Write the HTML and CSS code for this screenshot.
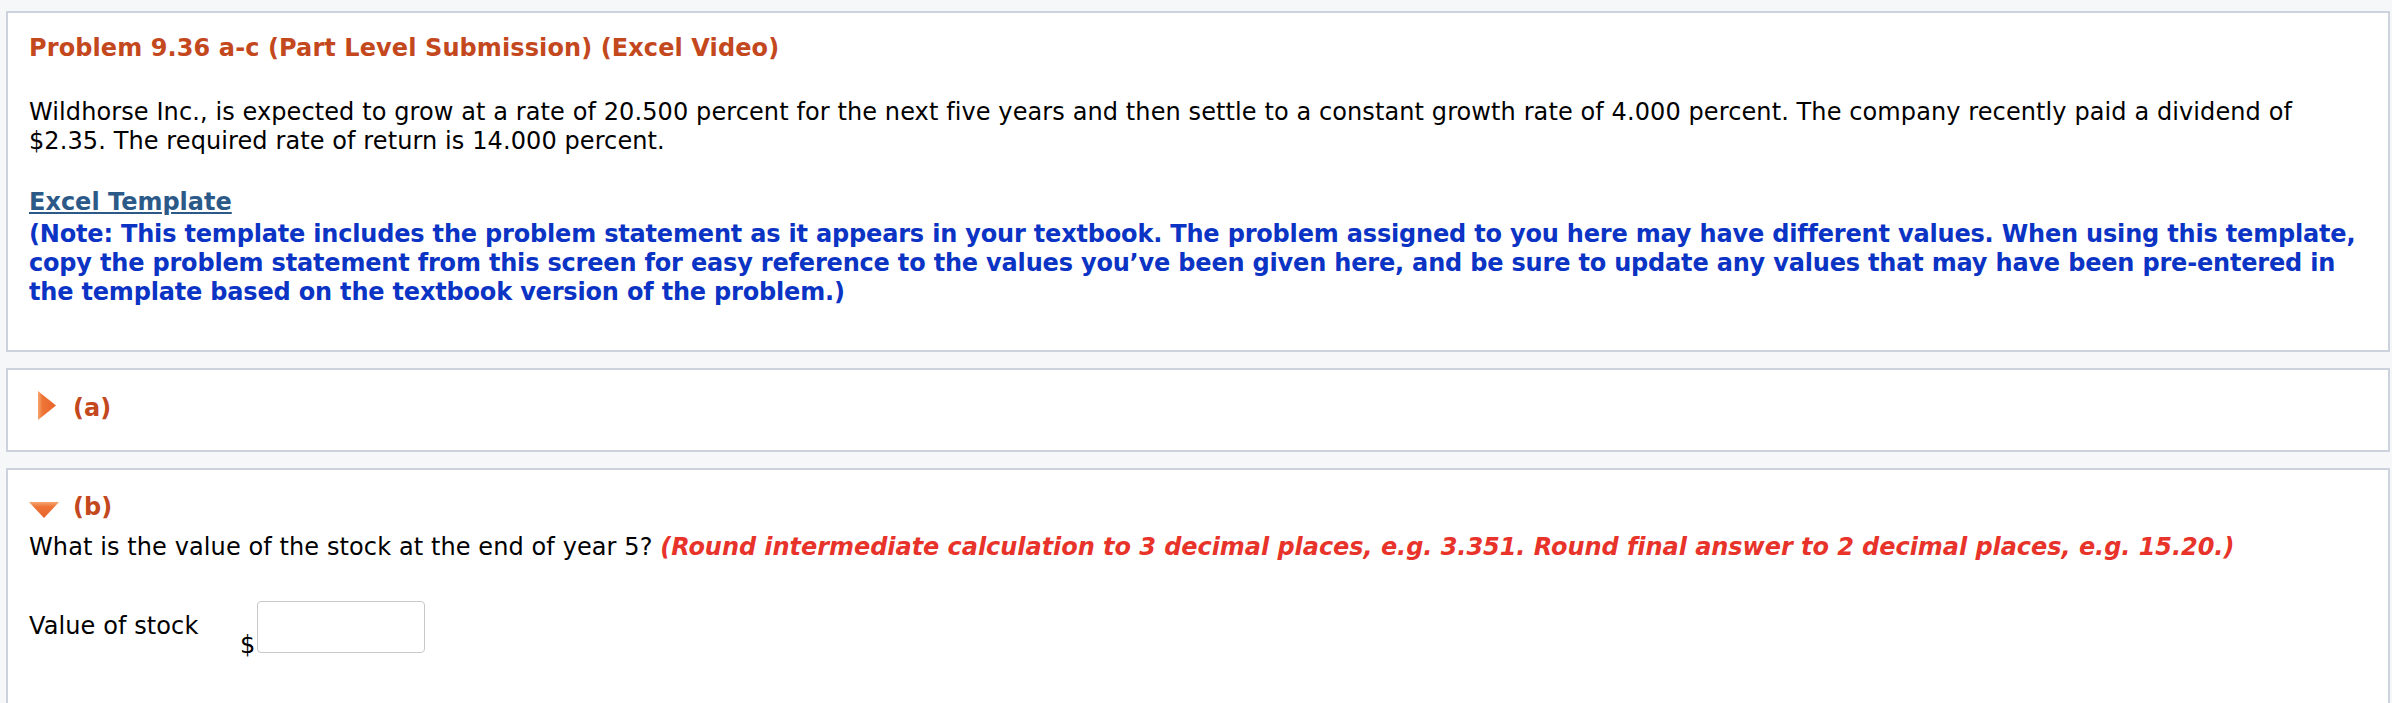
FILE: index.html
```html
<!DOCTYPE html>
<html lang="en">
<head>
<meta charset="utf-8">
<title>Problem 9.36 a-c</title>
<link rel="stylesheet" href="styles.css">
</head>
<body>
<div class="page">
  <section class="panel intro">
    <h1 class="title">Problem 9.36 a-c (Part Level Submission) (Excel Video)</h1>
    <p class="statement">Wildhorse Inc., is expected to grow at a rate of 20.500 percent for the next five years and then settle to a constant growth rate of 4.000 percent. The company recently paid a dividend of $2.35. The required rate of return is 14.000 percent.</p>
    <a class="template-link" href="#">Excel Template</a>
    <p class="note">(Note: This template includes the problem statement as it appears in your textbook. The problem assigned to you here may have different values. When using this template, copy the problem statement from this screen for easy reference to the values you’ve been given here, and be sure to update any values that may have been pre-entered in the template based on the textbook version of the problem.)</p>
  </section>

  <section class="panel part collapsed">
    <div class="part-head">
      <svg class="arrow-right" width="18" height="29" viewBox="0 0 18 29">
        <defs>
          <linearGradient id="gr" x1="0" y1="0" x2="1" y2="0">
            <stop offset="0" stop-color="#f6a56f"/>
            <stop offset="0.25" stop-color="#ee7536"/>
            <stop offset="1" stop-color="#e8622a"/>
          </linearGradient>
        </defs>
        <polygon points="0,0 18,14.5 0,29" fill="url(#gr)"/>
      </svg>
      <span class="part-label">(a)</span>
    </div>
  </section>

  <section class="panel part open">
    <div class="part-head">
      <svg class="arrow-down" width="30" height="16" viewBox="0 0 30 16">
        <defs>
          <linearGradient id="gd" x1="0" y1="0" x2="0" y2="1">
            <stop offset="0" stop-color="#f6a56f"/>
            <stop offset="0.3" stop-color="#ee7536"/>
            <stop offset="1" stop-color="#e8622a"/>
          </linearGradient>
        </defs>
        <polygon points="0,0 30,0 15,16" fill="url(#gd)"/>
      </svg>
      <span class="part-label">(b)</span>
    </div>
    <p class="question">What is the value of the stock at the end of year 5? <em class="hint">(Round intermediate calculation to 3 decimal places, e.g. 3.351. Round final answer to 2 decimal places, e.g. 15.20.)</em></p>
    <div class="answer-row">
      <span class="answer-label">Value of stock</span>
      <span class="currency">$</span>
      <input class="answer-input" type="text">
    </div>
  </section>
</div>
</body>
</html>
```

FILE: styles.css
```css
html, body {
  margin: 0;
  padding: 0;
}
body {
  background: #f6f7f9;
  font-family: "DejaVu Sans", Verdana, sans-serif;
  color: #000;
  font-size: 24px;
  letter-spacing: 0.1px;
}
.page {
  padding: 11px 2px 0 6px;
}
.panel {
  background: #fff;
  border: 2px solid #cdd3dd;
  margin-bottom: 16px;
}
.intro {
  padding: 19px 24px 43px 21px;
}
.title {
  margin: 0;
  font-size: 24px;
  letter-spacing: 0.1px;
  line-height: 32px;
  font-weight: bold;
  color: #c4481d;
}
.statement {
  margin: 34px 0 0;
  line-height: 29px;
}
.template-link {
  display: block;
  margin-top: 32px;
  line-height: 29px;
  font-weight: bold;
  letter-spacing: 0;
  color: #2c5a88;
  text-decoration: underline;
}
.note {
  margin: 3px 0 0;
  line-height: 29px;
  font-weight: bold;
  letter-spacing: -0.18px;
  color: #0b33c4;
}
.part {
  padding: 0 21px;
}
.part-head {
  display: flex;
  align-items: center;
  gap: 17px;
}
.collapsed .part-head {
  height: 76px;
  padding-bottom: 4px;
  padding-left: 9px;
}
.collapsed .arrow-right {
  margin-bottom: 6px;
}
.open .part-head {
  padding-top: 23px;
  gap: 14px;
}
.open .arrow-down {
  margin-top: 4px;
}
.part-label {
  font-weight: bold;
  letter-spacing: 0;
  color: #c4481d;
  line-height: 29px;
}
.question {
  margin: 11px 0 0;
  line-height: 29px;
}
.hint {
  font-style: italic;
  font-weight: bold;
  letter-spacing: -0.05px;
  color: #e8332a;
}
.answer-row {
  display: flex;
  align-items: flex-start;
  margin-top: 39px;
  padding-bottom: 60px;
}
.answer-label {
  line-height: 29px;
  margin-top: 11px;
  width: 211px;
}
.currency {
  margin-top: 30px;
  line-height: 29px;
}
.answer-input {
  width: 168px;
  height: 52px;
  box-sizing: border-box;
  border: 1px solid #c8c8c8;
  border-radius: 4px;
  margin: 0 0 0 2px;
  padding: 0 6px;
  font: inherit;
  background: #fff;
}
```
